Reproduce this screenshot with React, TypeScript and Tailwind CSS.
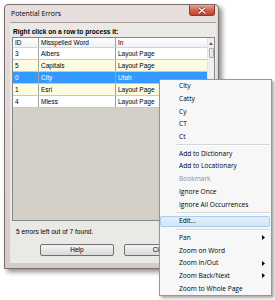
const dlgFont = { fontFamily: '"Liberation Sans", Arial, sans-serif' };
const uiFont = { fontFamily: '"Open Sans", "Noto Sans", sans-serif' };

type Row = { id: string; word: string; where: string; tone: 'white' | 'yellow' | 'selected' };

const rows: Row[] = [
  { id: '3', word: 'Albers', where: 'Layout Page', tone: 'white' },
  { id: '5', word: 'Capitals', where: 'Layout Page', tone: 'yellow' },
  { id: '0', word: 'City', where: 'Utah', tone: 'selected' },
  { id: '1', word: 'Esri', where: 'Layout Page', tone: 'yellow' },
  { id: '4', word: 'Mless', where: 'Layout Page', tone: 'white' },
];

type MenuEntry =
  | { kind: 'item'; label: string; disabled?: boolean; sub?: boolean; active?: boolean }
  | { kind: 'sep' };

const menu: MenuEntry[] = [
  { kind: 'item', label: 'City' },
  { kind: 'item', label: 'Catty' },
  { kind: 'item', label: 'Cy' },
  { kind: 'item', label: 'CT' },
  { kind: 'item', label: 'Ct' },
  { kind: 'sep' },
  { kind: 'item', label: 'Add to Dictionary' },
  { kind: 'item', label: 'Add to Locationary' },
  { kind: 'item', label: 'Bookmark', disabled: true },
  { kind: 'item', label: 'Ignore Once' },
  { kind: 'item', label: 'Ignore All Occurrences' },
  { kind: 'sep' },
  { kind: 'item', label: 'Edit...', active: true },
  { kind: 'sep' },
  { kind: 'item', label: 'Pan', sub: true },
  { kind: 'item', label: 'Zoom on Word' },
  { kind: 'item', label: 'Zoom In/Out', sub: true },
  { kind: 'item', label: 'Zoom Back/Next', sub: true },
  { kind: 'item', label: 'Zoom to Whole Page' },
];

function CloseButton() {
  return (
    <div className="w-[26px] h-[11px] rounded-b-[3px] border border-t-0 border-[#8c3a2e] bg-gradient-to-b from-[#e8a493] via-[#d2604c] to-[#c0432f] flex items-center justify-center">
      <svg width="8" height="7" viewBox="0 0 8 7">
        <path d="M1 1 L7 6 M7 1 L1 6" stroke="#5a2a22" strokeWidth="2.6" strokeLinecap="square" />
        <path d="M1 1 L7 6 M7 1 L1 6" stroke="#ffffff" strokeWidth="1.4" strokeLinecap="square" />
      </svg>
    </div>
  );
}

function ErrorList() {
  return (
    <div className="ml-[2px] w-[203px] h-[184px] border border-[#828790] bg-[#d4d0c8] flex">
      <div className="w-[194px] flex flex-col">
        <div className="h-[10px] flex bg-gradient-to-b from-white to-[#f1f2f4] border-b border-[#d5d5d5] text-[6.5px] leading-[10px] text-black">
          <div className="w-[26px] pl-[2px] border-r border-[#a0a0a0]">ID</div>
          <div className="w-[77px] pl-[2px] border-r border-[#a0a0a0]">Misspelled Word</div>
          <div className="flex-1 pl-[2px]">In</div>
        </div>
        {rows.map((r) => (
          <div
            key={r.id}
            className={
              'h-[12px] flex text-[6.5px] leading-[11px] border-b border-[#c8c8c8] ' +
              (r.tone === 'selected'
                ? 'bg-[#3399ff] text-white'
                : r.tone === 'yellow'
                ? 'bg-[#fdfce1] text-black'
                : 'bg-white text-black')
            }
          >
            <div className="w-[26px] pl-[2px] border-r border-[#a0a0a0]">{r.id}</div>
            <div className="w-[77px] pl-[2px] border-r border-[#a0a0a0]">{r.word}</div>
            <div className="flex-1 pl-[2px]">{r.where}</div>
          </div>
        ))}
      </div>
      <div className="w-[7px] flex flex-col bg-[#f0f0f0] border-l border-[#e3e3e3]">
        <div className="h-[10px] flex items-center justify-center">
          <svg width="4" height="3" viewBox="0 0 4 3">
            <path d="M0 3 L2 0 L4 3 Z" fill="#606060" />
          </svg>
        </div>
        <div className="h-[10px] mx-[0.5px] border border-[#a8a8a8] rounded-[1px] bg-gradient-to-r from-[#f4f4f4] to-[#dcdcdc]" />
      </div>
    </div>
  );
}

function WinButton({ label }: { label: string }) {
  return (
    <div className="w-[74px] h-[12px] rounded-[2px] border border-[#707070] bg-gradient-to-b from-[#f4f4f4] to-[#dadada] text-[6.5px] leading-[10px] text-center text-black">
      {label}
    </div>
  );
}

function Dialog() {
  return (
    <div
      className="w-[215px] h-[265px] border border-[#7a6d6b] rounded-t-[4px] bg-gradient-to-b from-[#e6dfde] to-[#d6cac8] shadow-[3px_3px_5px_rgba(0,0,0,0.45)] flex flex-col"
      style={dlgFont}
    >
      <div className="h-[17px] flex items-start justify-between">
        <div className="pl-[6px] pt-[4px] text-[6.9px] leading-[10px] text-black" style={uiFont}>
          Potential Errors
        </div>
        <div className="mr-[3px]">
          <CloseButton />
        </div>
      </div>
      <div className="ml-[5px] mr-[2px] h-[241px] bg-[#ebe9e5] border-t border-[#a99c9a] flex flex-col">
        <div className="pl-[3px] pt-[4px] h-[14px] text-[6.6px] leading-[10px] font-bold text-black">
          Right click on a row to process it:
        </div>
        <ErrorList />
        <div className="pl-[6px] mt-[6px] text-[6.6px] leading-[10px] text-black">
          5 errors left out of 7 found.
        </div>
        <div className="mt-[7px] ml-[30px] flex gap-[10px]">
          <WinButton label="Help" />
          <WinButton label="Close" />
        </div>
      </div>
    </div>
  );
}

function Arrow() {
  return (
    <svg width="3" height="5" viewBox="0 0 3 5">
      <path d="M0 0 L3 2.5 L0 5 Z" fill="#000" />
    </svg>
  );
}

function ContextMenu() {
  return (
    <div
      className="absolute left-[159px] top-[79px] w-[113px] border border-[#979797] bg-[#f7f7f7] shadow-[2px_2px_3px_rgba(0,0,0,0.35)] flex flex-col"
      style={uiFont}
    >
      {menu.map((m, i) =>
        m.kind === 'sep' ? (
          <div key={i} className="h-[4px] flex items-center pl-[16px] pr-[1px]">
            <div className="flex-1 h-[2px] border-t border-[#d7d7d7] border-b border-b-white" />
          </div>
        ) : (
          <div key={i} className="h-[12.7px] flex">
            <div
              className={
                'flex-1 flex items-center justify-between pr-[6px] text-[6.6px] leading-[10px] ' +
                (m.active
                  ? 'my-[1px] mr-[1px] pl-[18px] border border-[#a8cdf0] rounded-[2px] bg-gradient-to-b from-[#e4eefb] to-[#d3e5f8] '
                  : 'pl-[19px] ') +
                (m.disabled ? 'text-[#8d8d8d]' : 'text-black')
              }
            >
              <span>{m.label}</span>
              {m.sub && <Arrow />}
            </div>
          </div>
        )
      )}
    </div>
  );
}

export default function App() {
  return (
    <div className="relative w-[275px] h-[300px] bg-white overflow-hidden">
      <div className="pl-[4px] pt-[4px]">
        <Dialog />
      </div>
      <ContextMenu />
    </div>
  );
}
